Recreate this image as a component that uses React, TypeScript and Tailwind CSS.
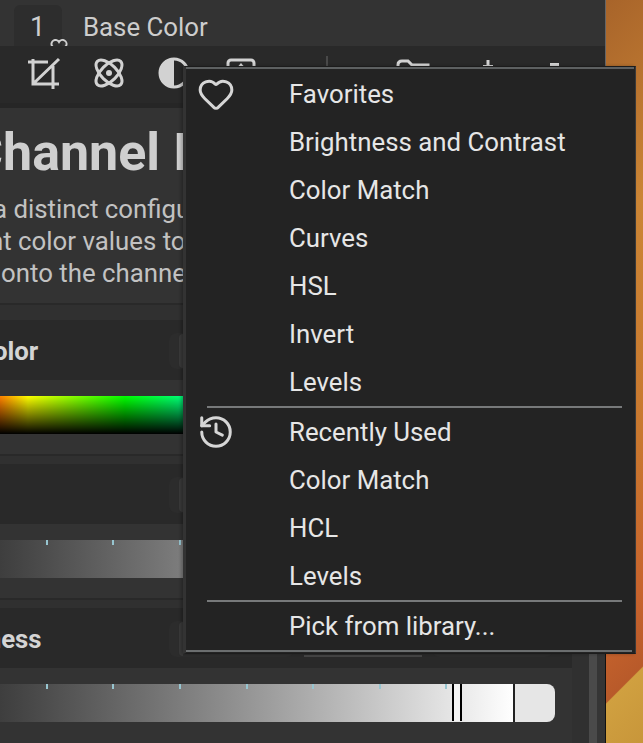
import React from "react";
import { Heart, History } from "lucide-react";

const font = { fontFamily: "Roboto, sans-serif" };

function Tick({ x }: { x: number }) {
  return <div className="absolute top-0 w-[2px] h-[5px] bg-[#97c5d0]" style={{ left: x }} />;
}

function Ticks({ xs }: { xs: number[] }) {
  return (
    <>
      {xs.map((x) => (
        <Tick key={x} x={x} />
      ))}
    </>
  );
}

function Header({ label, offset }: { label?: string; offset?: number }) {
  return (
    <div className="h-[60px] bg-[#292929] flex items-center justify-between pr-[19px]">
      <div className="w-[168px] overflow-hidden whitespace-nowrap text-[25.8px] font-bold text-[#d4d4d4] pt-[3px]">
        <div style={{ marginLeft: offset }}>{label}</div>
      </div>
      <div className="flex gap-[10px] h-[36px] mt-[2px] self-center">
        <div className="w-[125px] rounded-[8px] bg-[#2c2c2c] flex pl-[10px] py-[1px]">
          <div className="w-full border-l-[4px] border-[#3a3a3a] rounded-l-[4px]" />
        </div>
        <div className="w-[118px] flex items-end">
          <div className="w-full h-[2px] bg-[#444444]" />
        </div>
        <div className="w-[121px] rounded-[8px] bg-[#2c2c2c]" />
      </div>
    </div>
  );
}

const menuTop = ["Favorites", "Brightness and Contrast", "Color Match", "Curves", "HSL", "Invert", "Levels"];
const menuRecent = ["Recently Used", "Color Match", "HCL", "Levels"];

function Item({ label, icon }: { label: string; icon?: React.ReactNode }) {
  return (
    <div className="h-[48px] flex items-center">
      <div className="w-[103px] flex justify-center pr-[44px] text-[#d6d6d6] shrink-0">{icon}</div>
      <div className="pt-[1px]">{label}</div>
    </div>
  );
}

function Sep() {
  return <div className="h-[2px] ml-[21px] mr-[13px] bg-[#77797a]" />;
}

export default function App() {
  return (
    <div className="relative w-[643px] h-[743px] overflow-hidden flex bg-[#333333]" style={font}>
      <div className="w-[605px] flex flex-col shrink-0">
        <div className="h-[46px] bg-[#333333] flex pl-[14px] pt-[5px] overflow-hidden">
          <div className="relative w-[48px] h-[41px] rounded-t-[6px] bg-[#2d2d2d] text-[27px] text-[#cfcfcf] pl-[16px] pt-[2px]">
            1
            <svg className="absolute left-[36px] top-[34px]" width="18" height="16" viewBox="0 0 18 16" fill="none">
              <path d="M9 14 L2 7 A4 4 0 0 1 9 3 A4 4 0 0 1 16 7 Z" stroke="#cfcfcf" strokeWidth="2" />
            </svg>
          </div>
          <div className="ml-[22px] -translate-x-[1px] text-[25.8px] text-[#cdcdcd] pt-[4px] leading-[36px]">Base Color</div>
        </div>

        <div className="h-[57px] bg-[#292929] relative">
          <svg className="absolute left-0 top-0" width="605" height="57" viewBox="0 46 605 57" fill="none" stroke="#d2d2d2" strokeWidth="3">
            <path d="M28 62H48M53 66V89M33 59V84H59M59 59L34 83" />
            <ellipse cx="109" cy="73" rx="16.5" ry="8" transform="rotate(45 109 73)" />
            <ellipse cx="109" cy="73" rx="16.5" ry="8" transform="rotate(-45 109 73)" />
            <circle cx="109" cy="73" r="3" fill="#d2d2d2" stroke="none" />
            <circle cx="174" cy="73" r="14" />
            <path d="M174 58A15 15 0 0 0 174 88Z" fill="#d2d2d2" stroke="none" />
            <rect x="228" y="60" width="26" height="26" rx="3" />
            <path d="M241 63L235 70H247Z" fill="#d2d2d2" stroke="none" />
            <path d="M327 56V100" stroke="#555555" strokeWidth="1.5" />
            <path d="M398 80V65Q398 61 402 61H408L412 65H428V80" />
            <path d="M488 60V70" />
            <rect x="483" y="65" width="10" height="4" fill="#d2d2d2" stroke="none" />
            <rect x="550" y="63" width="9" height="6" fill="#d2d2d2" stroke="none" />
          </svg>
        </div>
        <div className="h-[5px] bg-[#262626]" />

        <div className="flex-1 flex min-h-0">
          <div className="w-[572px] overflow-hidden bg-[#333333] flex flex-col">
            <div className="h-[195px] overflow-hidden">
              <div className="text-[52px] font-bold text-[#cfcfcf] leading-[60px] mt-[15px] -ml-[31px] whitespace-nowrap">Channel Inputs</div>
              <div className="text-[25.8px] leading-[32px] text-[#c2c2c2] mt-[10px] whitespace-nowrap">
                <div className="-ml-[7px]">a distinct configuration</div>
                <div className="-ml-[11px]">nt color values to</div>
                <div className="ml-[1px]">onto the channel</div>
              </div>
            </div>
            <div className="h-[2px] bg-[#292929]" />
            <div className="h-[15px] bg-[#303030]" />

            <Header label="Color" offset={-24} />
            <div className="h-[74px] bg-[#333333] pt-[16px]">
              <div className="relative h-[38px] w-[555px] bg-[linear-gradient(to_right,#ff8000_0px,#ffff00_28px,#00ff00_125px,#00ff80_185px,#00ffff_280px,#0000ff_400px)]">
                <div className="absolute inset-0 bg-linear-to-b from-transparent to-black" />
              </div>
            </div>
            <div className="h-[2px] bg-[#292929]" />
            <div className="h-[8px] bg-[#303030]" />

            <Header />
            <div className="h-[74px] bg-[#333333] pt-[16px]">
              <div className="relative h-[38px] w-[555px] bg-[#e6e6e6]">
                <div className="h-full w-[514px] bg-linear-to-r from-[#3e3e3e] to-white" />
                <Ticks xs={[46, 112, 179]} />
              </div>
            </div>
            <div className="h-[2px] bg-[#292929]" />
            <div className="h-[8px] bg-[#303030]" />

            <Header label="Roughness" offset={-88} />
            <div className="flex-1 bg-[#333333] pt-[16px]">
              <div className="relative h-[38px] w-[555px] rounded-r-[8px] overflow-hidden bg-[#e6e6e6]">
                <div className="h-full w-[514px] bg-linear-to-r from-[#3e3e3e] to-white" />
                <Ticks xs={[46, 112, 179, 246, 312, 379, 445]} />
                <div className="absolute top-0 h-[37px] left-[452px] w-[2px] bg-black" />
                <div className="absolute top-0 h-[37px] left-[454px] w-[6px] bg-[#f4f4f4]" />
                <div className="absolute top-0 h-[37px] left-[460px] w-[2px] bg-black" />
                <div className="absolute top-0 h-full left-[513px] w-[2px] bg-[#222222]" />
              </div>
            </div>
          </div>
          <div className="w-[17px] bg-[#303030]" />
          <div className="w-[8px] bg-[#4a4a4a]" />
          <div className="w-[8px] bg-[#353535]" />
        </div>
      </div>

      <div className="w-[1px] bg-[linear-gradient(to_bottom,#666666_0%,#666666_50%,#111111_50%,#111111_100%)]" />
      <div className="flex-1 bg-[linear-gradient(135deg,#a8642a_0%,#cb8535_30%,#c9782f_60%,#c8642d_80%,#b85a2a_90.1%,#d0a040_90.3%,#c8963a_100%)]" />

      <div className="absolute left-[183px] top-[66px] w-[453px] h-[588px] bg-[#232323] border-l-[3px] border-r-[1px] border-y-[1px] border-l-[#333333] border-r-[#3a3a3a] border-y-[#1c1c1c] text-[25.8px] text-[#e6e6e6] shadow-[-2px_0_3px_rgba(0,0,0,0.25)]">
        <div className="h-[2px] bg-[#5d6061] mr-[1px]" />
        <div className="pt-[1px]">
          {menuTop.map((l, i) => (
            <Item key={l} label={l} icon={i === 0 ? <Heart size={38} strokeWidth={1.9} /> : undefined} />
          ))}
        </div>
        <Sep />
        <div>
          {menuRecent.map((l, i) => (
            <Item key={l + i} label={l} icon={i === 0 ? <History size={38} strokeWidth={1.9} /> : undefined} />
          ))}
        </div>
        <Sep />
        <Item label="Pick from library..." />
        <div className="h-[2px] bg-[#6b6e6f] mr-[3px]" />
      </div>
    </div>
  );
}
